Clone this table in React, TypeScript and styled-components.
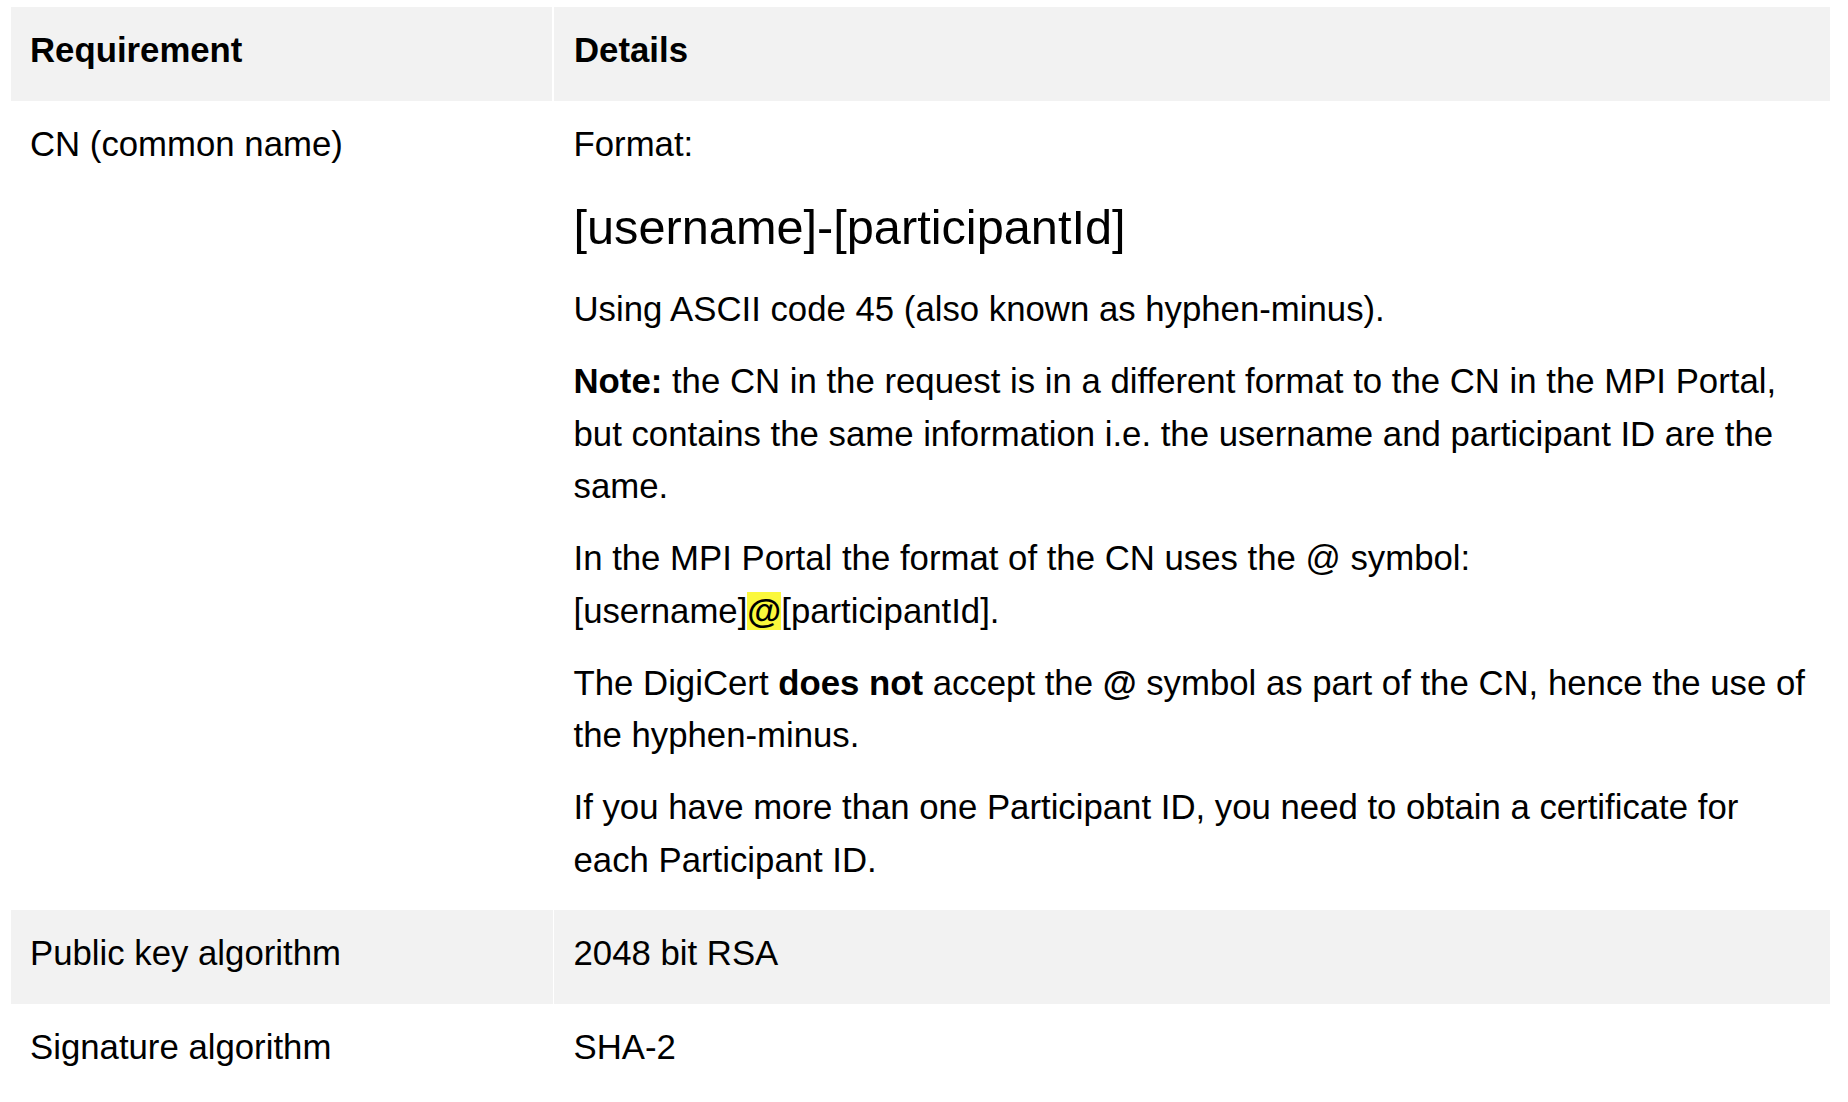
import styled, { createGlobalStyle } from "styled-components";

const GlobalStyle = createGlobalStyle`
  body {
    margin: 0;
    background: #ffffff;
    font-family: "Liberation Sans", Arial, Helvetica, sans-serif;
    color: #000000;
  }
`;

const Page = styled.div`
  padding: 7px 18px 0 11px;
`;

const Table = styled.table`
  width: 100%;
  border-collapse: collapse;
  table-layout: fixed;
  font-size: 34.75px;
  line-height: 52.5px;
`;

const Row = styled.tr<{ $shaded?: boolean }>`
  background: ${(p) => (p.$shaded ? "#f2f2f2" : "transparent")};
`;

const HeadCell = styled.th<{ $first?: boolean }>`
  text-align: left;
  font-weight: 700;
  vertical-align: top;
  padding: 17px 20px 24px ${(p) => (p.$first ? "19px" : "20px")};
  width: ${(p) => (p.$first ? "542px" : "auto")};
  box-sizing: border-box;
  border-right: ${(p) => (p.$first ? "2px solid #ffffff" : "none")};
`;

const Cell = styled.td<{ $first?: boolean }>`
  vertical-align: top;
  padding: 17px 20px 24px ${(p) => (p.$first ? "19px" : "20px")};
  box-sizing: border-box;
  border-right: ${(p) => (p.$first ? "1px solid #ffffff" : "none")};
`;

const Para = styled.p`
  margin: 0 0 19.5px;
  &:last-child {
    margin-bottom: 0;
  }
`;

const BigFormat = styled.p`
  margin: 0 0 19.5px;
  font-size: 48.7px;
  line-height: 74px;
`;

const Highlight = styled.b`
  background: #fbf83c;
`;

function App() {
  return (
    <Page>
      <GlobalStyle />
      <Table>
        <thead>
          <Row $shaded>
            <HeadCell $first>Requirement</HeadCell>
            <HeadCell>Details</HeadCell>
          </Row>
        </thead>
        <tbody>
          <Row>
            <Cell $first>CN (common name)</Cell>
            <Cell>
              <Para>Format:</Para>
              <BigFormat>[username]-[participantId]</BigFormat>
              <Para>Using ASCII code 45 (also known as hyphen-minus).</Para>
              <Para>
                <b>Note:</b> the CN in the request is in a different format to the CN in the MPI Portal,
                but contains the same information i.e. the username and participant ID are the same.
              </Para>
              <Para>
                In the MPI Portal the format of the CN uses the @ symbol:
                [username]<Highlight>@</Highlight>[participantId].
              </Para>
              <Para>
                The DigiCert <b>does not</b> accept the <b>@</b> symbol as part of the CN, hence the use of
                the hyphen-minus.
              </Para>
              <Para>
                If you have more than one Participant ID, you need to obtain a certificate for each
                Participant ID.
              </Para>
            </Cell>
          </Row>
          <Row $shaded>
            <Cell $first>Public key algorithm</Cell>
            <Cell>2048 bit RSA</Cell>
          </Row>
          <Row>
            <Cell $first>Signature algorithm</Cell>
            <Cell>SHA-2</Cell>
          </Row>
        </tbody>
      </Table>
    </Page>
  );
}

export default App;
